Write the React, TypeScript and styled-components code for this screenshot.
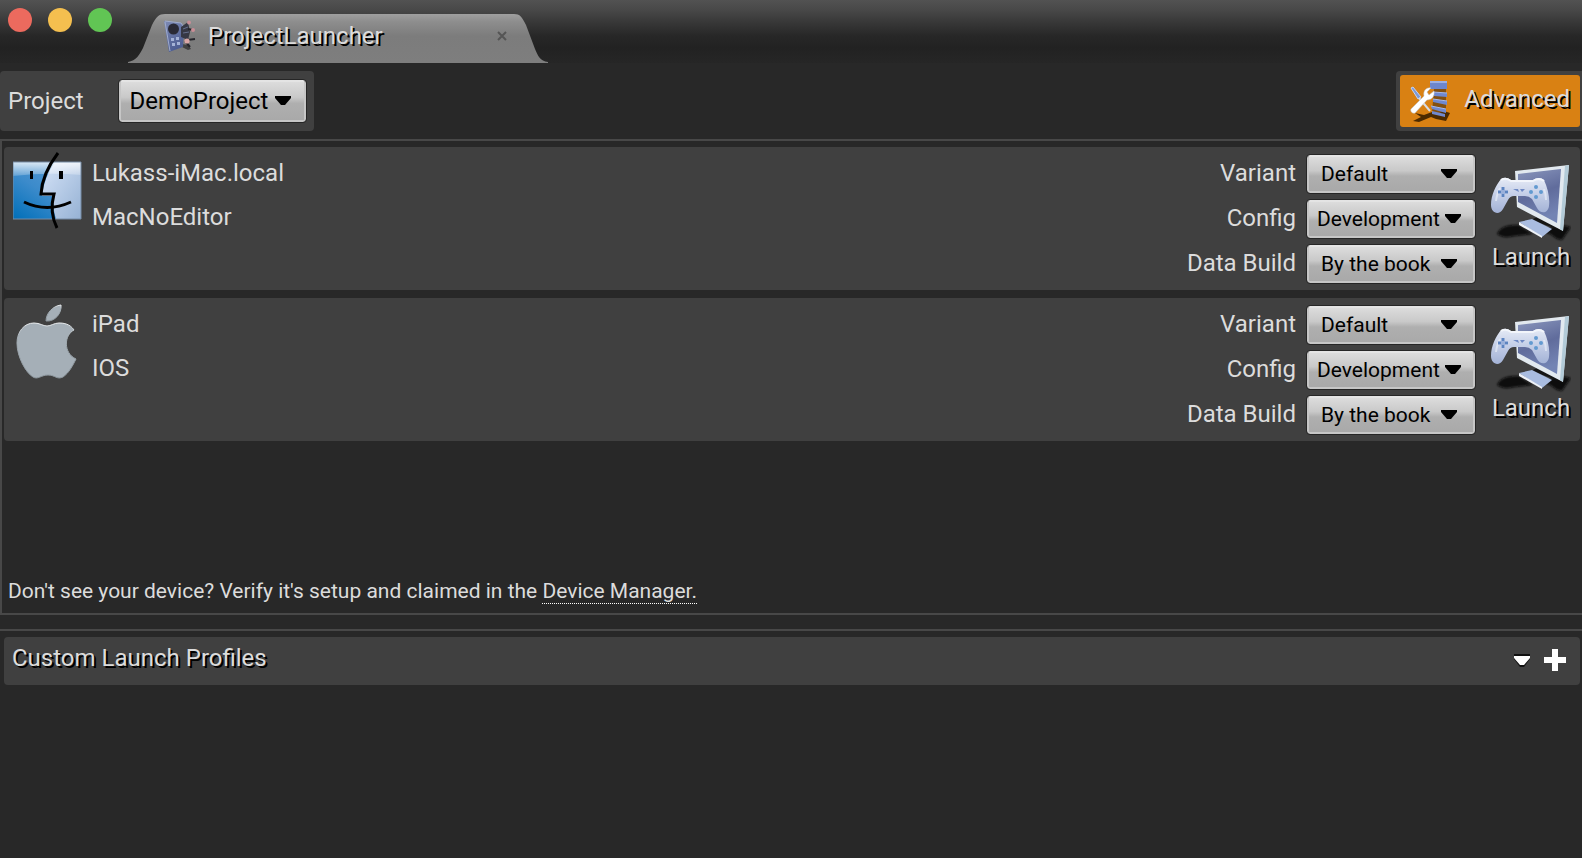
import React from 'react';
import styled, { createGlobalStyle } from 'styled-components';

const Global = createGlobalStyle`
  *, *::before, *::after { box-sizing: border-box; }
  html, body, #root { height: 100%; }
  body {
    margin: 0;
    background: #282828;
    color: #dcdcdc;
    font-family: Roboto, "Liberation Sans", sans-serif;
    font-size: 24px;
    line-height: 28px;
  }
  button, select { font: inherit; color: inherit; margin: 0; }
  button { background: none; border: 0; padding: 0; cursor: pointer; }
  h2, p { margin: 0; font: inherit; }
`;

const Window = styled.div`
  display: flex;
  flex-direction: column;
  min-height: 100%;
`;

const TitleBar = styled.header`
  display: flex;
  align-items: flex-end;
  height: 63px;
  background: linear-gradient(#525252 0, #484848 10px, #383838 22px, #272727 36px, #222 48px, #262626 63px);
`;

const WindowButtons = styled.div`
  display: flex;
  gap: 16px;
  align-self: flex-start;
  width: 128px;
  padding: 8px;
`;

const WindowButton = styled.button<{ $color: string }>`
  width: 24px;
  height: 24px;
  border-radius: 50%;
  background: ${(p) => p.$color};
`;

const Tab = styled.div`
  display: flex;
  align-items: center;
  position: relative;
  width: 420px;
  height: 50px;
  padding: 0 41px 4px 36px;
`;

const TabShape = styled.svg`
  position: absolute;
  inset: 0;
  width: 100%;
  height: 100%;
`;

const TabIcon = styled.svg`
  position: relative;
  width: 32px;
  height: 32px;
`;

const TabTitle = styled.span`
  position: relative;
  flex: 1;
  padding-left: 12px;
  text-shadow: 2px 2px 0 #000;
`;

const TabClose = styled.button`
  position: relative;
  display: flex;
  width: 10px;
  height: 10px;
`;

const Toolbar = styled.div`
  display: flex;
  justify-content: space-between;
  margin: 8px 0;
  height: 60px;
`;

const ProjectBox = styled.div`
  display: flex;
  align-items: center;
  gap: 35px;
  padding: 0 8px;
  border-radius: 4px;
  background: #404040;
`;

const AdvancedFrame = styled.div`
  padding: 4px 2px 4px 4px;
  border-radius: 4px 0 0 4px;
  background: #404040;
`;

const AdvancedButton = styled.button`
  display: flex;
  align-items: center;
  gap: 14px;
  height: 52px;
  padding: 0 10px 4px;
  border-radius: 3px;
  background: #d98113;
  text-shadow: 2px 2px 0 #000;

  svg { width: 40px; height: 42px; margin-top: 4px; }
`;

const SelectBox = styled.span<{ $width: number; $height: number }>`
  position: relative;
  display: flex;
  width: ${(p) => p.$width}px;
  height: ${(p) => p.$height}px;
`;

const Select = styled.select<{ $inset: number; $small?: boolean }>`
  appearance: none;
  width: 100%;
  height: 100%;
  padding: 0 0 0 ${(p) => p.$inset}px;
  border: 2px solid #c6c6c6;
  border-top-color: #e4e4e4;
  border-radius: 3px;
  outline: 1px solid #262626;
  background: linear-gradient(#dcdcdc, #c9c9c9 40%, #afafaf 56%, #a9a9a9);
  color: #000;
  font-size: ${(p) => (p.$small ? 21 : 24)}px;
`;

const SelectArrow = styled.svg<{ $right: number }>`
  position: absolute;
  top: 50%;
  right: ${(p) => p.$right}px;
  width: 16px;
  height: 9px;
  margin-top: -5px;
  pointer-events: none;
`;

const Panel = styled.section`
  display: flex;
  flex-direction: column;
  gap: 8px;
  padding: 6px 2px;
  border: 2px solid #484848;
  border-right: 0;
`;

const DevicePanel = styled(Panel)`
  min-height: 476px;
`;

const ProfilePanel = styled(Panel)`
  flex: 1;
  margin-top: 14px;
  padding-left: 4px;
  border-width: 2px 0 0;
`;

const DeviceRow = styled.article`
  display: flex;
  height: 143px;
  padding: 5px 9px 0;
  border-radius: 4px;
  background: #404040;
`;

const PlatformIcon = styled.svg`
  width: 72px;
  height: 80px;
`;

const DeviceText = styled.div`
  flex: 1;
  padding: 7px 0 0 7px;

  p { margin-bottom: 16px; }
`;

const Settings = styled.div`
  display: grid;
  grid-template-columns: auto auto;
  grid-auto-rows: 38px;
  align-content: start;
  align-items: center;
  gap: 7px 11px;
  padding-top: 3px;
  text-align: right;

  label { padding-bottom: 2px; }
`;

const LaunchButton = styled.button`
  display: flex;
  flex-direction: column;
  align-items: center;
  width: 80px;
  margin-left: 16px;
  padding-top: 13px;
  align-self: flex-start;
  text-shadow: 2px 2px 0 #000;

  svg { width: 80px; height: 78px; }
`;

const Hint = styled.p`
  margin-top: auto;
  padding: 0 4px 4px;
  font-size: 21px;
  line-height: 24px;
`;

const HintLink = styled.a`
  color: inherit;
  text-decoration: none;
  border-bottom: 1px dotted #fff;
`;

const ProfileHeader = styled.div`
  display: flex;
  align-items: center;
  gap: 13px;
  height: 48px;
  padding: 0 13px 2px 8px;
  border-radius: 4px;
  background: #404040;

  h2 { flex: 1; padding-bottom: 4px; text-shadow: 2px 2px 0 #000; }
  button, svg { display: block; }
`;

function ProjectIcon() {
  return (
    <TabIcon viewBox="0 0 32 32" aria-hidden="true">
      <defs>
        <linearGradient id="pj" x1="0" y1="0" x2="0.4" y2="1">
          <stop offset="0" stopColor="#7d8ab4" />
          <stop offset="1" stopColor="#4d5d92" />
        </linearGradient>
      </defs>
      <path d="M18 24l6 1 3 4-3 1-6-3z" fill="#222" opacity="0.65" />
      <path d="M0 1l17 2 3 3-1 21-14 5z" fill="url(#pj)" />
      <path d="M1 1l16 2 2 3M1 2l5 29" fill="none" stroke="#a0accd" strokeWidth="1" />
      <circle cx="9.500" cy="9" r="5.500" fill="#2a2a35" />
      <g fill="#a4b2d6">
        <rect x="7" y="18" width="3" height="3" /><rect x="12" y="17" width="3" height="3" />
        <rect x="8" y="23" width="3" height="3" /><rect x="13" y="22" width="3" height="3" />
      </g>
      <path d="M17 7l7-5 2 10-2 8-7-3z" fill="#363844" />
      <path d="M19 9l5-2M19 13l6-1" stroke="#66708f" strokeWidth="1" />
      <path d="M23 20l8-1M21 21l5 6M24 9l5 1" stroke="#26262c" strokeWidth="2" />
      <circle cx="25" cy="2.500" r="2" fill="#c98e97" />
      <circle cx="29" cy="10" r="2" fill="#c98e97" />
      <circle cx="23" cy="21" r="2.600" fill="#d9a6a6" />
    </TabIcon>
  );
}

function ToolsIcon() {
  return (
    <svg viewBox="0 0 40 42" aria-hidden="true">
      <path d="M5 33l9 2 8-3 5 2 7-3 6 2-4 8-10-2-5-2-12 5-6-1 8-4z" fill="#4c2a00" />
      <path d="M20 1h17v8H20z" fill="#6d86cc" />
      <path d="M20 1h17v2H20z" fill="#9db0e3" />
      <path d="M24 9h12v24H22z" fill="#4a3110" opacity="0.6" />
      <path d="M23 12l14 1v4l-13-1zM23 19l14 2v4l-14-3zM21 26l15 3v4l-14-4zM22 31l13 3v3l-13-3z" fill="#7089d0" />
      <path d="M23 12l14 1M23 19l14 2M21 26l15 3" stroke="#a8b9ea" strokeWidth="1" />
      <path d="M1 8l2-1 8 10-3 2z" fill="#7d9ad8" stroke="#c3d3f5" strokeWidth="1" />
      <path d="M9 18l11 13" stroke="#d8dce4" strokeWidth="2" />
      <path d="M1 29l13-13c-1-5 2-9 7-8l-4 4 2 3 5-4c1 5-2 9-7 9L5 33c-3 1-5-2-4-4z" fill="#fff" stroke="#b9bdc6" strokeWidth="0.500" />
    </svg>
  );
}

function FinderIcon() {
  return (
    <PlatformIcon viewBox="0 0 72 80" aria-hidden="true">
      <defs>
        <linearGradient id="fl" x1="0.800" y1="0" x2="0" y2="1">
          <stop offset="0" stopColor="#5a9cd4" />
          <stop offset="0.500" stopColor="#3c8bcb" />
          <stop offset="1" stopColor="#006fb9" />
        </linearGradient>
        <linearGradient id="fr" x1="0" y1="0" x2="1" y2="1">
          <stop offset="0" stopColor="#d5e3f8" />
          <stop offset="1" stopColor="#96b2d4" />
        </linearGradient>
        <linearGradient id="fg" x1="0" y1="0" x2="0" y2="1">
          <stop offset="0" stopColor="#fff" stopOpacity="0.800" />
          <stop offset="1" stopColor="#fff" stopOpacity="0.200" />
        </linearGradient>
      </defs>
      <path d="M0 10h68v57H0z" fill="url(#fl)" />
      <path d="M42 10h26v57H43q-4-12-2-23H29Q31 25 42 10z" fill="url(#fr)" />
      <path d="M0 10h68v13Q35 20 0 24z" fill="url(#fg)" />
      <path d="M0 10h68v57H0z" fill="none" stroke="#748ba5" strokeWidth="1" />
      <path d="M17 19h3v8h-3zM46 19h4v8h-4z" fill="#000" />
      <path d="M45 1Q29 22 28 42h13Q36 60 44 76" fill="none" stroke="#000" strokeWidth="3" />
      <path d="M11 50q23 11 47 0" fill="none" stroke="#000" strokeWidth="3" />
    </PlatformIcon>
  );
}

function AppleIcon() {
  return (
    <PlatformIcon viewBox="1 0 72 80" aria-hidden="true">
      <defs>
        <linearGradient id="ap" x1="0" y1="0" x2="0" y2="1">
          <stop offset="0" stopColor="#eef1f3" />
          <stop offset="0.250" stopColor="#a5afb6" />
          <stop offset="1" stopColor="#8b959c" />
        </linearGradient>
      </defs>
      <g fill="#a5afb7" stroke="url(#ap)" strokeWidth="1">
        <path d="M49 2C50 10 43 19 34 18C34 10 41 3 49 2z" />
        <path d="M62 27C58 21 52 20 47 20C42 20 39 23 35 23C31 23 28 20 22 20C12 20 5 29 5 40C5 54 14 70 21 74C26 77 29 72 36 72C43 72 45 77 51 74C57 70 61 62 64 56C51 50 52 32 62 27z" />
      </g>
    </PlatformIcon>
  );
}

function LaunchIcon() {
  return (
    <svg viewBox="0 0 80 78" aria-hidden="true">
      <defs>
        <linearGradient id="sc" x1="0" y1="0" x2="0.300" y2="1">
          <stop offset="0" stopColor="#8b97bd" />
          <stop offset="0.550" stopColor="#606c9c" />
          <stop offset="1" stopColor="#7384b4" />
        </linearGradient>
        <linearGradient id="pad" x1="0" y1="0" x2="0" y2="1">
          <stop offset="0" stopColor="#e6ebf6" />
          <stop offset="0.450" stopColor="#c6d0e8" />
          <stop offset="1" stopColor="#a3b2d6" />
        </linearGradient>
        <filter id="soft"><feGaussianBlur stdDeviation="1" /></filter>
      </defs>
      <g filter="url(#soft)" fill="#0a0a0a">
        <path d="M6 69q4-10 22-9l14 9-18 2q-12 3-18-2z" />
        <path d="M52 67l15-8 13 3-9 13-5-1-7-5z" />
      </g>
      <path d="M40 55l26 9 2-6-22-6z" fill="#151515" />
      <path d="M28 57l13-3 20 10-10 8z" fill="#a9bce0" />
      <path d="M28 57l23 14v2L28 60z" fill="#eef2f8" />
      <path d="M24 6l54-6-6 66-46-24z" fill="#e2e9ef" />
      <path d="M27 9l43-5-4 54-39-21z" fill="url(#sc)" />
      <path d="M74 1l4-1-6 66-3-2z" fill="#b3cbd8" />
      <path d="M10 14q5-3 10 1h22q6-4 11 0c4 9 6 18 5 26-1 8-9 8-12 2l-5-9q-3-3-7-3H23q-4 0-6 4l-5 9C8 51 0 48 0 40c0-10 5-20 10-26z" fill="url(#pad)" />
      <path d="M10 15q5-3 10 1h22q6-4 11 0" fill="none" stroke="#f2f5fb" strokeWidth="2" />
      <path d="M5 36q1-8 4-13M55 35q0-6-2-11" fill="none" stroke="#edf1fa" strokeWidth="2" opacity="0.600" />
      <path d="M12 22v10M7 27h10" stroke="#9ab0da" strokeWidth="4" />
      <path d="M12 22v3M12 29v3M7 27h3M14 27h3" stroke="#5c84c0" strokeWidth="2" />
      <path d="M22 24h5l1 3zM29 24h5l-3 3z" fill="#6e89c4" />
      <g fill="#639ad0">
        <circle cx="45" cy="22" r="2" />
        <circle cx="45" cy="32" r="2" />
        <circle cx="40" cy="27" r="2" />
        <circle cx="50" cy="27" r="2" />
      </g>
    </svg>
  );
}

interface DropdownProps {
  id: string;
  value: string;
  width: number;
  height: number;
  inset: number;
  arrowRight: number;
  small?: boolean;
}

function Dropdown({ id, value, width, height, inset, arrowRight, small }: DropdownProps) {
  return (
    <SelectBox $width={width} $height={height}>
      <Select id={id} $inset={inset} $small={small} defaultValue={value}>
        <option>{value}</option>
      </Select>
      <SelectArrow $right={arrowRight} viewBox="0 0 16 9" aria-hidden="true">
        <path d="M0 0h16v2L10 9H6L0 2z" fill="#000" />
      </SelectArrow>
    </SelectBox>
  );
}

const settings = [
  { label: 'Variant', value: 'Default', inset: 12, arrowRight: 18 },
  { label: 'Config', value: 'Development', inset: 8, arrowRight: 14 },
  { label: 'Data Build', value: 'By the book', inset: 12, arrowRight: 18 },
];

const devices = [
  { name: 'Lukass-iMac.local', platform: 'MacNoEditor', Icon: FinderIcon },
  { name: 'iPad', platform: 'IOS', Icon: AppleIcon },
];

export default function App() {
  return (
    <>
      <Global />
      <Window>
        <TitleBar>
          <WindowButtons>
            <WindowButton $color="#ec6a5e" aria-label="Close window" />
            <WindowButton $color="#f4bf4f" aria-label="Minimize window" />
            <WindowButton $color="#61c554" aria-label="Zoom window" />
          </WindowButtons>
          <Tab>
            <TabShape viewBox="0 0 420 50" preserveAspectRatio="none" aria-hidden="true">
              <defs>
                <linearGradient id="tab" x1="0" y1="0" x2="0" y2="1">
                  <stop offset="0" stopColor="#a0a0a0" />
                  <stop offset="0.150" stopColor="#8e8e8e" />
                  <stop offset="0.450" stopColor="#7c7c7c" />
                  <stop offset="1" stopColor="#7e7e7e" />
                </linearGradient>
              </defs>
              <path d="M0 50v-1C8 48 12 41 15 35L24 12C28 4 31 1 37 1H386C392 1 394 4 398 12L407 36C410 43 412 48 420 49v1z" fill="url(#tab)" />
            </TabShape>
            <ProjectIcon />
            <TabTitle>ProjectLauncher</TabTitle>
            <TabClose aria-label="Close tab">
              <svg width="10" height="10" viewBox="0 0 10 10">
                <path d="M1 1l8 8M9 1L1 9" stroke="#555" strokeWidth="2" />
              </svg>
            </TabClose>
          </Tab>
        </TitleBar>

        <Toolbar>
          <ProjectBox>
            <label htmlFor="project">Project</label>
            <Dropdown id="project" value="DemoProject" width={187} height={42} inset={9} arrowRight={15} />
          </ProjectBox>
          <AdvancedFrame>
            <AdvancedButton>
              <ToolsIcon />
              Advanced
            </AdvancedButton>
          </AdvancedFrame>
        </Toolbar>

        <DevicePanel>
          {devices.map(({ name, platform, Icon }) => (
            <DeviceRow key={name}>
              <Icon />
              <DeviceText>
                <p>{name}</p>
                <p>{platform}</p>
              </DeviceText>
              <Settings>
                {settings.map((s) => {
                  const id = `${platform}-${s.label}`;
                  return (
                    <React.Fragment key={s.label}>
                      <label htmlFor={id}>{s.label}</label>
                      <Dropdown id={id} value={s.value} width={168} height={38} inset={s.inset} arrowRight={s.arrowRight} small />
                    </React.Fragment>
                  );
                })}
              </Settings>
              <LaunchButton>
                <LaunchIcon />
                Launch
              </LaunchButton>
            </DeviceRow>
          ))}
          <Hint>
            Don't see your device? Verify it's setup and claimed in the <HintLink href="#devices">Device Manager.</HintLink>
          </Hint>
        </DevicePanel>

        <ProfilePanel>
          <ProfileHeader>
            <h2>Custom Launch Profiles</h2>
            <button aria-label="Profile options">
              <svg width="16" height="13" viewBox="0 0 16 13">
                <path d="M0 0h16v5l-6 8H6L0 5z" fill="#111" />
                <path d="M0 2h16v2l-6 7H6L0 4z" fill="#fff" />
              </svg>
            </button>
            <button aria-label="Add profile">
              <svg width="24" height="24" viewBox="0 0 24 24">
                <path d="M9 1h6v8h8v6h-8v8H9v-8H1V9h8z" fill="#fff" />
              </svg>
            </button>
          </ProfileHeader>
        </ProfilePanel>
      </Window>
    </>
  );
}
